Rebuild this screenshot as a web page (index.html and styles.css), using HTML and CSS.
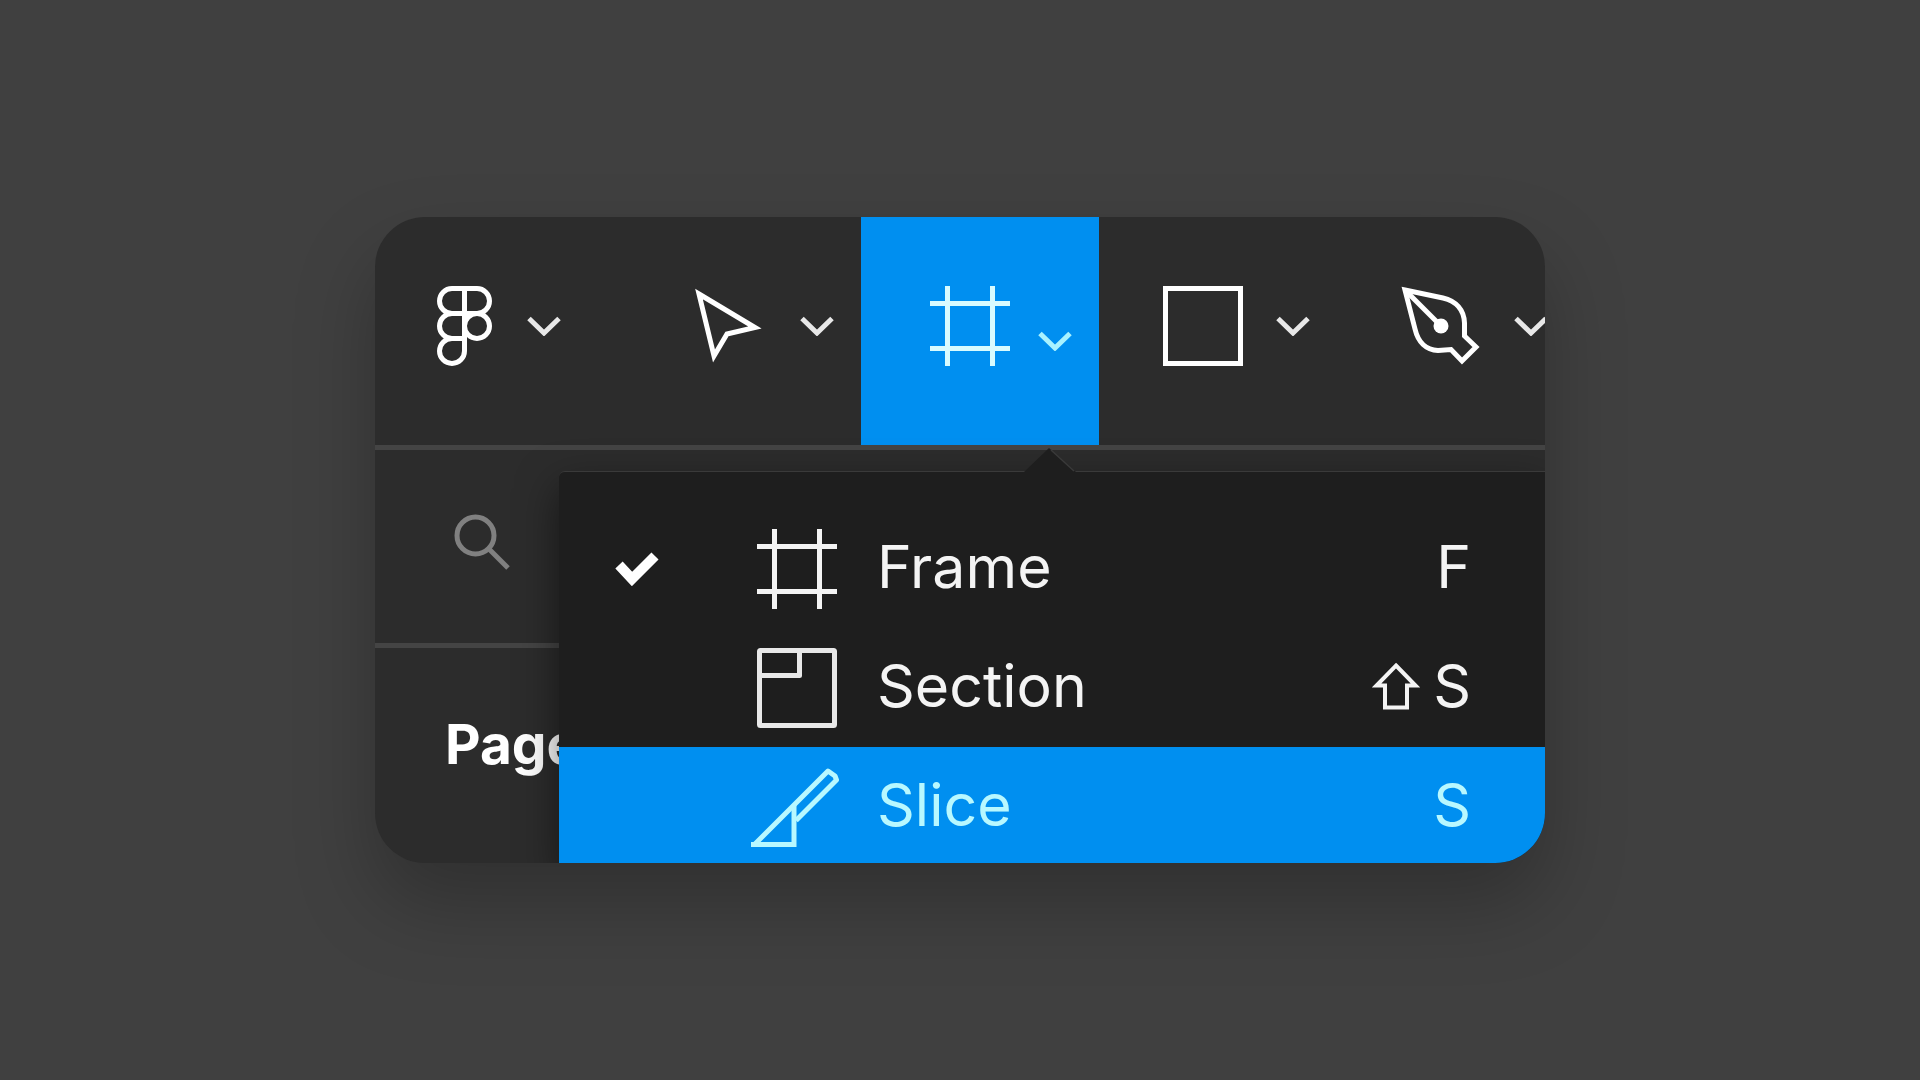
FILE: index.html
```html
<!DOCTYPE html>
<html lang="en">
<head>
  <meta charset="utf-8">
  <meta name="viewport" content="width=device-width, initial-scale=1">
  <title>Slice tool</title>
  <link rel="stylesheet" href="styles.css">
</head>
<body>
  <svg class="sprite" aria-hidden="true">
    <symbol id="chevron" viewBox="0 0 34 20">
      <path d="M2 2.5 17 17 32 2.5" fill="none" stroke="currentColor" stroke-width="5"/>
    </symbol>
    <symbol id="frame" viewBox="0 0 80 80">
      <path d="M17.5 0v80M62.5 0v80M0 17.5h80M0 62.5h80" fill="none" stroke="currentColor" stroke-width="5"/>
    </symbol>
  </svg>

  <main class="card">
    <nav class="toolbar" aria-label="Tools">
      <button class="tool tool-main" type="button" aria-label="Main menu">
        <svg class="logo" viewBox="0 0 55 80" fill="none" stroke="currentColor" stroke-width="5">
          <path d="M15 2.5h25a12.5 12.5 0 0 1 0 25H15a12.5 12.5 0 0 1 0-25z"/>
          <path d="M27.5 27.5H15a12.5 12.5 0 0 0 0 25h12.5"/>
          <circle cx="40" cy="40" r="12.5"/>
          <path d="M27.5 52.5H15A12.5 12.5 0 1 0 27.5 65V2.5"/>
        </svg>
        <svg class="chevron"><use href="#chevron"/></svg>
      </button>
      <button class="tool" type="button" aria-label="Move">
        <svg class="tool-icon" viewBox="0 0 90 80">
          <path d="M12 8 68 41.500 40 48 27 70z" fill="none" stroke="currentColor" stroke-width="5" stroke-miterlimit="10"/>
        </svg>
        <svg class="chevron"><use href="#chevron"/></svg>
      </button>
      <button class="tool tool-active" type="button" aria-label="Frame" aria-haspopup="menu" aria-expanded="true">
        <svg class="tool-icon" viewBox="0 0 90 80"><use href="#frame" x="5" width="80" height="80"/></svg>
        <svg class="chevron"><use href="#chevron"/></svg>
      </button>
      <button class="tool" type="button" aria-label="Rectangle">
        <svg class="tool-icon" viewBox="0 0 90 80">
          <path d="M2.500 2.500h75v75h-75z" fill="none" stroke="currentColor" stroke-width="5"/>
        </svg>
        <svg class="chevron"><use href="#chevron"/></svg>
      </button>
      <button class="tool" type="button" aria-label="Pen">
        <svg class="tool-icon" viewBox="0 0 90 80" fill="none" stroke="currentColor" stroke-width="5">
          <path d="M4 4 42 12C55 15 63 24 63.500 37V50L75 61 61 75 50 63.500 37 64.500C25 64 17 56 14 43z"/>
          <path d="M4 4 40 40" stroke-width="5"/>
          <circle cx="40" cy="40" r="7.500" fill="currentColor" stroke="none"/>
        </svg>
        <svg class="chevron"><use href="#chevron"/></svg>
      </button>
    </nav>

    <div class="body">
      <button class="search" type="button" aria-label="Search">
        <svg viewBox="0 0 57 56" fill="none" stroke="currentColor" stroke-width="5">
          <circle cx="21.500" cy="21.500" r="18.500"/>
          <path d="M34 34 54 54"/>
        </svg>
      </button>
      <h2 class="pages">Pages</h2>

      <div class="menu" role="menu" aria-label="Frame tools">
        <svg class="menu-arrow" viewBox="0 0 52 24">
          <path d="M0 24 25 0 52 24z" fill="#1e1e1e"/>
          <path d="M27 2 50 23" fill="none" stroke="#3a3a3a" stroke-width="1.500"/>
        </svg>
        <button class="item" type="button" role="menuitemradio" aria-checked="true">
          <svg class="check" viewBox="0 0 44 34"><path d="M4 13 17 27 40 4" fill="none" stroke="currentColor" stroke-width="10"/></svg>
          <svg class="item-icon" viewBox="-8 0 92 80"><use href="#frame" width="80" height="80"/></svg>
          <span class="label">Frame</span>
          <kbd class="keys">F</kbd>
        </button>
        <button class="item" type="button" role="menuitemradio" aria-checked="false">
          <span class="check"></span>
          <svg class="item-icon" viewBox="-8 0 92 80" fill="none" stroke="#e8e8e8" stroke-width="5">
            <rect x="2.500" y="2.500" width="75" height="75" rx="1"/>
            <path d="M42.500 2.500v25h-40" stroke-linejoin="round"/>
          </svg>
          <span class="label">Section</span>
          <kbd class="keys">
            <svg class="shift" viewBox="0 0 48 48" role="img" aria-label="Shift"><path d="M24 3.500 43.500 23.500H35V45.500H13V23.500H4.500z" fill="none" stroke="currentColor" stroke-width="4"/></svg>S</kbd>
        </button>
        <button class="item item-active" type="button" role="menuitemradio" aria-checked="false">
          <span class="check"></span>
          <svg class="item-icon" viewBox="0 0 92 80" fill="none" stroke="currentColor" stroke-width="5">
            <path d="M47 53.500 87.500 13 86 9 79 4 5 78" stroke-linejoin="round"/>
            <path d="M2 77.500H45V38"/>
          </svg>
          <span class="label">Slice</span>
          <kbd class="keys">S</kbd>
        </button>
      </div>
    </div>
  </main>
</body>
</html>
```
FILE: styles.css
```css
* {
  box-sizing: border-box;
}

body {
  margin: 0;
  min-height: 100vh;
  padding: 24px;
  display: flex;
  align-items: center;
  justify-content: center;
  background: #404040;
  color: #fff;
  font-family: Inter, "Liberation Sans", sans-serif;
}

button {
  border: 0;
  padding: 0;
  background: none;
  color: inherit;
  font: inherit;
  text-align: left;
}

svg {
  display: block;
  flex: none;
}

.sprite {
  position: absolute;
  width: 0;
  height: 0;
}

.card {
  width: 100%;
  max-width: 1170px;
  border-radius: 50px;
  overflow: hidden;
  background: #2c2c2c;
  box-shadow: 0 40px 80px rgba(0, 0, 0, 0.25);
}

/* Toolbar */

.toolbar {
  display: flex;
  border-bottom: 5px solid #444;
}

.tool {
  flex: none;
  width: 238px;
  height: 228px;
  padding: 0 0 10px 64px;
  display: flex;
  align-items: center;
  gap: 23px;
}

.tool-main {
  width: 248px;
  padding-left: 62px;
  gap: 35px;
}

.tool-icon {
  width: 90px;
  height: 80px;
}

.logo {
  width: 55px;
  height: 80px;
}

.chevron {
  width: 34px;
  height: 20px;
  color: #e8e8e8;
}

.tool-active {
  background: #008ff0;
  color: #d8fbff;
}

.tool-active .chevron {
  margin-top: 30px;
  color: #a8f2ff;
}

/* Left panel */

.body {
  position: relative;
}

.search {
  width: 100%;
  display: flex;
  padding: 64px 79px 73px;
  border-bottom: 5px solid #444;
  color: #808080;
}

.search svg {
  width: 57px;
  height: 56px;
}

.pages {
  margin: 0;
  padding: 56px 70px 79px;
  font-size: 55px;
  line-height: 80px;
  font-weight: 700;
}

/* Drop-down menu */

.menu {
  position: absolute;
  top: 21px;
  left: 184px;
  right: 0;
  padding-top: 37px;
  border-top: 1px solid #3a3a3a;
  border-top-left-radius: 6px;
  background: #1e1e1e;
  box-shadow: 0 16px 40px rgba(0, 0, 0, 0.5);
}

.menu-arrow {
  position: absolute;
  top: -24px;
  left: 465px;
  width: 52px;
  height: 24px;
}

.item {
  width: 100%;
  height: 119px;
  padding: 0 74px 0 56px;
  display: flex;
  align-items: center;
  color: #f4f4f4;
  font-size: 59px;
  line-height: 80px;
}

.check {
  flex: none;
  width: 44px;
  height: 34px;
  margin-right: 90px;
  color: #fff;
}

.item-icon {
  width: 92px;
  height: 80px;
  margin-right: 36px;
}

.label {
  flex: 1;
  padding-bottom: 4px;
}

.keys {
  display: flex;
  align-items: center;
  gap: 13px;
  padding-bottom: 4px;
  font: inherit;
}

.shift {
  width: 48px;
  height: 48px;
}

.item-active {
  background: #008ff0;
  color: #b8f8ff;
}
```
